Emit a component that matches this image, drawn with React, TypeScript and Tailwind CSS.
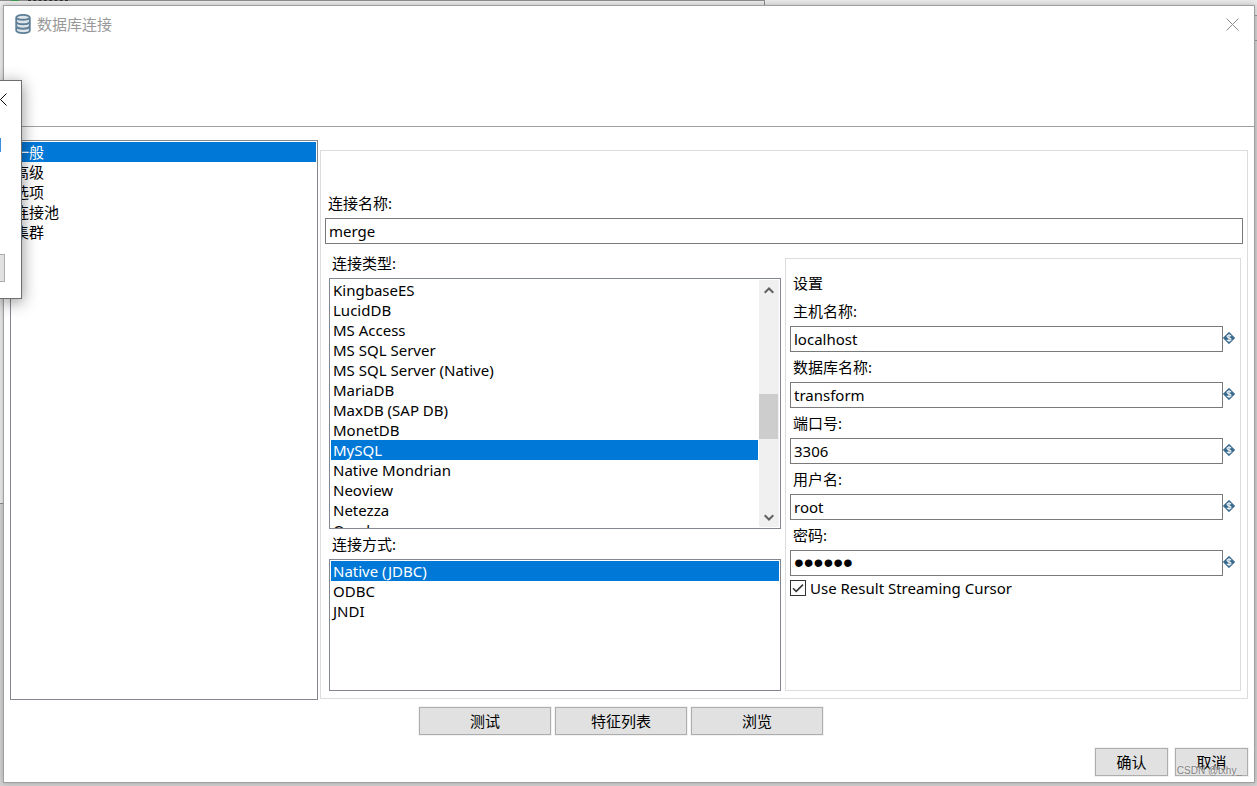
import React, { useState } from "react"
import { clsx } from "clsx"

const CATEGORIES = ["一般", "高级", "选项", "连接池", "集群"]
const DATABASE_TYPES = [
	"KingbaseES",
	"LucidDB",
	"MS Access",
	"MS SQL Server",
	"MS SQL Server (Native)",
	"MariaDB",
	"MaxDB (SAP DB)",
	"MonetDB",
	"MySQL",
	"Native Mondrian",
	"Neoview",
	"Netezza",
	"Oracle"
]
const ACCESS_METHODS = ["Native (JDBC)", "ODBC", "JNDI"]
const FIELDS = [
	{ id: "host", label: "主机名称:", value: "localhost", type: "text" },
	{ id: "database", label: "数据库名称:", value: "transform", type: "text" },
	{ id: "port", label: "端口号:", value: "3306", type: "text" },
	{ id: "user", label: "用户名:", value: "root", type: "text" },
	{ id: "password", label: "密码:", value: "123456", type: "password" }
]

interface ListBoxProps {
	label: string
	items: string[]
	initial: string
	className?: string
	children?: React.ReactNode
}

const ListBox: React.FC<ListBoxProps> = ({
	label,
	items,
	initial,
	className,
	children
}) => {
	const [selected, setSelected] = useState<string>(initial)
	return (
		<div
			className={clsx(
				"flex overflow-hidden border border-[#828790] bg-white px-px",
				className
			)}
		>
			<ul role="listbox" aria-label={label} className="min-w-0 flex-1">
				{items.map((item) => (
					<li
						key={item}
						role="option"
						aria-selected={item === selected}
						onClick={() => setSelected(item)}
						className={clsx(
							"h-5 cursor-default pl-[2px] whitespace-nowrap",
							item === selected && "bg-[#0078d7] text-white"
						)}
					>
						{item}
					</li>
				))}
			</ul>
			{children}
		</div>
	)
}

const ScrollArrow: React.FC<{ direction: "up" | "down" }> = ({ direction }) => (
	<button
		type="button"
		aria-label={direction}
		className="flex h-5 w-full items-center justify-center"
	>
		<svg width="10" height="7" viewBox="0 0 10 7" fill="none">
			<path
				d={direction === "up" ? "M.7 5.7 5 1.5l4.3 4.2" : "M.7 1.3 5 5.5l4.3-4.2"}
				stroke="#606060"
				strokeWidth="2"
			/>
		</svg>
	</button>
)

const ScrollBar: React.FC = () => (
	<div className="mb-px ml-px flex w-5 flex-col bg-[#f0f0f0]">
		<ScrollArrow direction="up" />
		<div className="flex-[94]" />
		<div className="mr-px flex-[45] bg-[#cdcdcd]" />
		<div className="flex-[68]" />
		<ScrollArrow direction="down" />
	</div>
)

const VariableIcon: React.FC = () => (
	<svg width="12" height="12" viewBox="0 0 12 12" className="mb-[2px] shrink-0">
		<path
			d="M6 .3 11.7 6 6 11.7.3 6Z"
			fill="#38688c"
			stroke="#38688c"
			strokeLinejoin="round"
			strokeWidth=".8"
		/>
		<path
			d="M8 4.2C7.6 3.1 4.1 2.8 4.1 4.6c0 1.7 3.9 1 3.9 2.8 0 1.7-3.6 1.6-4.1.3M6 2v8"
			fill="none"
			stroke="#e4ecf2"
			strokeWidth="1.2"
		/>
	</svg>
)

const DatabaseIcon: React.FC = () => (
	<svg width="16" height="20" viewBox="0 0 16 20">
		<path
			d="M1.2 3.5C1.2 0 14.8 0 14.8 3.5v13c0 3.4-13.6 3.4-13.6 0Z"
			fill="#dfe6eb"
			stroke="#5e7f96"
			strokeWidth="1.8"
		/>
		<path
			d="M1.5 4.2c2 2.2 11 2.2 13 0M1.5 8.6c2 2.2 11 2.2 13 0M1.5 13c2 2.2 11 2.2 13 0"
			fill="none"
			stroke="#5e7f96"
			strokeWidth="2"
		/>
	</svg>
)

const CloseIcon: React.FC = () => (
	<svg width="13" height="13" viewBox="0 0 13 13" fill="none" stroke="currentColor">
		<path d="M.5.5l12 12M12.5.5l-12 12" />
	</svg>
)

const PushButton: React.FC<{ className: string; children: React.ReactNode }> = ({
	className,
	children
}) => (
	<button
		type="button"
		className={clsx(
			"h-7 border border-[#adadad] bg-[#e1e1e1] outline outline-[#f2f2f2]",
			className
		)}
	>
		{children}
	</button>
)

// Edges of the windows that sit behind the dialog
const BackgroundWindows: React.FC = () => (
	<div aria-hidden="true" className="absolute inset-0 overflow-hidden">
		<div className="absolute top-0 right-0 left-0 h-4 bg-[#ebebeb]" />
		<div className="absolute top-[15px] right-0 h-[26px] w-1 border-y border-[#9a9a9a] bg-[#d6d6d6]" />
		<div className="absolute top-0 left-0 h-[504px] w-[765px] border-t border-r border-b border-[#8c8c8c] bg-[#ededed]" />
		<div className="absolute top-0 left-[11px] h-px w-2 bg-[#3a9a50]" />
		<div className="absolute top-0 left-7 h-px w-10 border-t border-dashed border-[#333333]" />
	</div>
)

const NeighbourWindow: React.FC = () => (
	<div className="absolute top-20 left-0 h-[219px] w-[22px] border-y border-r border-[#6e6e6e] bg-white shadow-[0_3px_16px_rgba(0,0,0,0.45)]">
		<svg
			width="7"
			height="13"
			viewBox="0 0 7 13"
			fill="none"
			stroke="#000000"
			className="mt-3"
		>
			<path d="M6.5.5l-6 6 6 6" />
		</svg>
		<div className="mt-8 h-[14px] w-px bg-[#3a8fdc]" />
		<div className="mt-[102px] h-7 w-[5px] border-y border-r border-[#adadad] bg-[#e1e1e1]" />
	</div>
)

export default function App() {
	const [streaming, setStreaming] = useState<boolean>(true)
	return (
		<div className="relative flex min-h-screen flex-col bg-[#d4d4d4] pt-[5px] pr-[2px] pb-[3px] pl-[3px] font-['Noto_Sans','Noto_Sans_CJK_SC',sans-serif] text-[15px] leading-5 text-black">
			<BackgroundWindows />
			<main className="relative flex flex-1 flex-col border border-[#a0a0a0] bg-white shadow-[0_0_6px_rgba(0,0,0,0.25)]">
				<header className="flex h-[121px] items-start justify-between border-b border-[#a0a0a0] pt-2 pr-[15px] pl-[11px]">
					<div className="flex items-center gap-[6px] text-[#999999]">
						<DatabaseIcon />
						<h1>数据库连接</h1>
					</div>
					<button type="button" aria-label="关闭" className="pt-1 text-[#8c8c8c]">
						<CloseIcon />
					</button>
				</header>

				<div className="flex flex-1 gap-[2px] pt-[13px] pr-[6px] pl-[6px]">
					<ListBox
						label="分类"
						items={CATEGORIES}
						initial="一般"
						className="w-[308px] shrink-0 pt-px"
					/>
					<div className="mt-[10px] mb-px flex flex-1 flex-col border border-[#dcdcdc] px-1 pt-[42px] pb-[7px]">
						<label htmlFor="name" className="pl-[3px]">
							连接名称:
						</label>
						<input
							id="name"
							defaultValue="merge"
							className="mt-[5px] h-[26px] border border-[#7a7a7a] px-[3px]"
						/>
						<div className="grid flex-1 grid-cols-[452fr_456fr] gap-1 pt-[9px] pr-[2px] pl-1">
							<div className="flex min-w-0 flex-col gap-[5px]">
								<h2 className="pl-[3px]">连接类型:</h2>
								<ListBox
									label="连接类型"
									items={DATABASE_TYPES}
									initial="MySQL"
									className="h-[251px] pt-px"
								>
									<ScrollBar />
								</ListBox>
								<h2 className="pl-[3px]">连接方式:</h2>
								<ListBox
									label="连接方式"
									items={ACCESS_METHODS}
									initial="Native (JDBC)"
									className="flex-1 pt-px"
								/>
							</div>
							<section className="mt-[5px] flex min-w-0 flex-col border border-[#dcdcdc] px-1 pt-[14px]">
								<h2 className="mb-[3px] pl-[3px]">设置</h2>
								{FIELDS.map(({ id, label, value, type }) => (
									<div key={id} className="flex flex-col gap-[5px] pt-[5px]">
										<label htmlFor={id} className="pl-[3px]">
											{label}
										</label>
										<div className="flex items-center pr-px">
											<input
												id={id}
												type={type}
												defaultValue={value}
												className={clsx(
													"h-[26px] min-w-0 flex-1 border border-[#7a7a7a] px-[3px]",
													type === "password" &&
														"font-['Liberation_Sans',sans-serif] text-[28px] leading-6"
												)}
											/>
											<VariableIcon />
										</div>
									</div>
								))}
								<label className="mt-[2px] flex items-center gap-1">
									<span className="relative flex size-4">
										<input
											type="checkbox"
											checked={streaming}
											onChange={(evt) => setStreaming(evt.target.checked)}
											className="size-4 appearance-none border border-[#333333] bg-white"
										/>
										{streaming && (
											<svg
												viewBox="0 0 16 16"
												fill="none"
												stroke="#333333"
												strokeWidth="1.5"
												className="pointer-events-none absolute inset-0"
											>
												<path d="M3 8.2l3.2 3.2L13 4.6" />
											</svg>
										)}
									</span>
									Use Result Streaming Cursor
								</label>
							</section>
						</div>
					</div>
				</div>

				<div className="mt-[7px] flex justify-center gap-1 pr-4">
					<PushButton className="w-[132px]">测试</PushButton>
					<PushButton className="w-[132px]">特征列表</PushButton>
					<PushButton className="w-[132px]">浏览</PushButton>
				</div>
				<footer className="relative mt-[13px] flex justify-end gap-[7px] pr-[6px] pb-[6px]">
					<PushButton className="w-[73px]">确认</PushButton>
					<PushButton className="w-[73px]">取消</PushButton>
					<span className="pointer-events-none absolute right-3 bottom-[3px] font-['Liberation_Sans',sans-serif] text-[10px] leading-4 text-[#808080] [text-shadow:0_0_2px_#ffffff]">
						CSDN @txhy_
					</span>
				</footer>
			</main>
			<NeighbourWindow />
		</div>
	)
}
